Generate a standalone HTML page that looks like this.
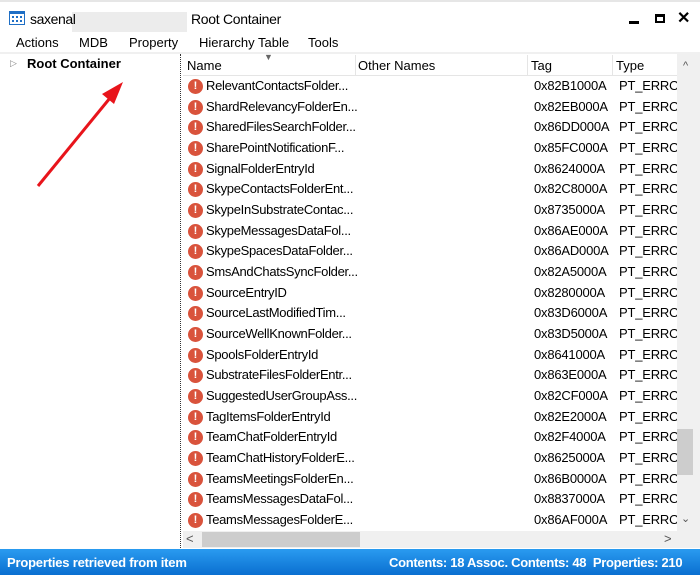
<!DOCTYPE html>
<html><head><style>
*{margin:0;padding:0;box-sizing:border-box}
body{width:700px;height:575px;overflow:hidden;background:#fff;font-family:"Liberation Sans",sans-serif;font-size:13px;color:#000;position:relative}
.a{position:absolute;white-space:nowrap}
#rows{position:absolute;left:183px;top:76px;width:494px;height:455px;overflow:hidden}
.row{position:absolute;left:3px;height:20px;width:490px;letter-spacing:-0.3px}
.ic{position:absolute;left:2px;top:3px;width:15px;height:15px;border-radius:50%;background:#d9533c;color:#fff;font-weight:bold;font-size:11px;text-align:center;line-height:15px;letter-spacing:0}
.nm{position:absolute;left:20px;top:2px}
.tg{position:absolute;left:348px;top:2px;letter-spacing:-0.2px}
.ty{position:absolute;left:433px;top:2px;letter-spacing:-0.2px}
</style></head><body>
<div class="a" style="left:0;top:0;width:700px;height:2px;background:#e6e6e6"></div>
<svg class="a" style="left:9px;top:11px" width="16" height="14"><rect x="0.5" y="0.5" width="15" height="13" fill="#fff" stroke="#1f6fc5"/><rect x="0" y="0" width="16" height="3" fill="#1f6fc5"/><g fill="#1f6fc5"><rect x="3" y="5" width="2" height="2"/><rect x="7" y="5" width="2" height="2"/><rect x="11" y="5" width="2" height="2"/><rect x="3" y="9" width="2" height="2"/><rect x="7" y="9" width="2" height="2"/><rect x="11" y="9" width="2" height="2"/></g></svg>
<div class="a" style="left:72px;top:12px;width:115px;height:20px;background:#ececec"></div>
<div class="a" style="left:30px;top:11px;font-size:14px;letter-spacing:-0.4px">saxenal</div>
<div class="a" style="left:191px;top:11px;font-size:14px;letter-spacing:-0.3px">Root Container</div>
<div class="a" style="left:629px;top:21px;width:10px;height:3px;background:#000"></div>
<div class="a" style="left:655px;top:14px;width:10px;height:9px;border:2px solid #000;border-top-width:3px"></div>
<div class="a" style="left:677px;top:8px;font-size:16px;font-weight:bold">✕</div>
<div class="a" style="left:16px;top:35px">Actions</div>
<div class="a" style="left:79px;top:35px">MDB</div>
<div class="a" style="left:129px;top:35px">Property</div>
<div class="a" style="left:199px;top:35px">Hierarchy Table</div>
<div class="a" style="left:308px;top:35px">Tools</div>
<div class="a" style="left:0;top:52px;width:700px;height:2px;background:#f0f0f0"></div>
<div class="a" style="left:10px;top:58px;font-size:9px;color:#888">▷</div>
<div class="a" style="left:27px;top:56px;font-weight:bold">Root Container</div>
<div class="a" style="left:180px;top:54px;height:494px;border-left:1px dotted #333"></div>
<div class="a" style="left:183px;top:54px;width:495px;height:22px;border-bottom:1px solid #e5e5e5"></div>
<div class="a" style="left:187px;top:58px">Name</div>
<div class="a" style="left:264px;top:52px;font-size:9px;color:#666">▼</div>
<div class="a" style="left:355px;top:55px;height:20px;border-left:1px solid #e5e5e5"></div>
<div class="a" style="left:358px;top:58px">Other Names</div>
<div class="a" style="left:527px;top:55px;height:20px;border-left:1px solid #e5e5e5"></div>
<div class="a" style="left:531px;top:58px">Tag</div>
<div class="a" style="left:612px;top:55px;height:20px;border-left:1px solid #e5e5e5"></div>
<div class="a" style="left:616px;top:58px">Type</div>
<div class="a" style="left:677px;top:54px;width:23px;height:477px;background:#f0f0f0"></div>
<div class="a" style="left:683px;top:60px;font-size:11px;color:#555">^</div>
<div class="a" style="left:677px;top:429px;width:16px;height:46px;background:#cdcdcd"></div>
<div class="a" style="left:681px;top:512px;font-size:11px;color:#555">⌄</div>
<div class="a" style="left:183px;top:531px;width:517px;height:17px;background:#f0f0f0"></div>
<div class="a" style="left:186px;top:531px;font-size:13px;color:#555">&lt;</div>
<div class="a" style="left:202px;top:532px;width:158px;height:15px;background:#cdcdcd"></div>
<div class="a" style="left:664px;top:531px;font-size:13px;color:#555">&gt;</div>
<div id="rows">
<div class="row" style="top:0px"><div class="ic">!</div><div class="nm">RelevantContactsFolder...</div><div class="tg">0x82B1000A</div><div class="ty">PT_ERROR</div></div>
<div class="row" style="top:21px"><div class="ic">!</div><div class="nm">ShardRelevancyFolderEn...</div><div class="tg">0x82EB000A</div><div class="ty">PT_ERROR</div></div>
<div class="row" style="top:41px"><div class="ic">!</div><div class="nm">SharedFilesSearchFolder...</div><div class="tg">0x86DD000A</div><div class="ty">PT_ERROR</div></div>
<div class="row" style="top:62px"><div class="ic">!</div><div class="nm">SharePointNotificationF...</div><div class="tg">0x85FC000A</div><div class="ty">PT_ERROR</div></div>
<div class="row" style="top:83px"><div class="ic">!</div><div class="nm">SignalFolderEntryId</div><div class="tg">0x8624000A</div><div class="ty">PT_ERROR</div></div>
<div class="row" style="top:103px"><div class="ic">!</div><div class="nm">SkypeContactsFolderEnt...</div><div class="tg">0x82C8000A</div><div class="ty">PT_ERROR</div></div>
<div class="row" style="top:124px"><div class="ic">!</div><div class="nm">SkypeInSubstrateContac...</div><div class="tg">0x8735000A</div><div class="ty">PT_ERROR</div></div>
<div class="row" style="top:145px"><div class="ic">!</div><div class="nm">SkypeMessagesDataFol...</div><div class="tg">0x86AE000A</div><div class="ty">PT_ERROR</div></div>
<div class="row" style="top:165px"><div class="ic">!</div><div class="nm">SkypeSpacesDataFolder...</div><div class="tg">0x86AD000A</div><div class="ty">PT_ERROR</div></div>
<div class="row" style="top:186px"><div class="ic">!</div><div class="nm">SmsAndChatsSyncFolder...</div><div class="tg">0x82A5000A</div><div class="ty">PT_ERROR</div></div>
<div class="row" style="top:207px"><div class="ic">!</div><div class="nm">SourceEntryID</div><div class="tg">0x8280000A</div><div class="ty">PT_ERROR</div></div>
<div class="row" style="top:227px"><div class="ic">!</div><div class="nm">SourceLastModifiedTim...</div><div class="tg">0x83D6000A</div><div class="ty">PT_ERROR</div></div>
<div class="row" style="top:248px"><div class="ic">!</div><div class="nm">SourceWellKnownFolder...</div><div class="tg">0x83D5000A</div><div class="ty">PT_ERROR</div></div>
<div class="row" style="top:269px"><div class="ic">!</div><div class="nm">SpoolsFolderEntryId</div><div class="tg">0x8641000A</div><div class="ty">PT_ERROR</div></div>
<div class="row" style="top:289px"><div class="ic">!</div><div class="nm">SubstrateFilesFolderEntr...</div><div class="tg">0x863E000A</div><div class="ty">PT_ERROR</div></div>
<div class="row" style="top:310px"><div class="ic">!</div><div class="nm">SuggestedUserGroupAss...</div><div class="tg">0x82CF000A</div><div class="ty">PT_ERROR</div></div>
<div class="row" style="top:331px"><div class="ic">!</div><div class="nm">TagItemsFolderEntryId</div><div class="tg">0x82E2000A</div><div class="ty">PT_ERROR</div></div>
<div class="row" style="top:351px"><div class="ic">!</div><div class="nm">TeamChatFolderEntryId</div><div class="tg">0x82F4000A</div><div class="ty">PT_ERROR</div></div>
<div class="row" style="top:372px"><div class="ic">!</div><div class="nm">TeamChatHistoryFolderE...</div><div class="tg">0x8625000A</div><div class="ty">PT_ERROR</div></div>
<div class="row" style="top:393px"><div class="ic">!</div><div class="nm">TeamsMeetingsFolderEn...</div><div class="tg">0x86B0000A</div><div class="ty">PT_ERROR</div></div>
<div class="row" style="top:413px"><div class="ic">!</div><div class="nm">TeamsMessagesDataFol...</div><div class="tg">0x8837000A</div><div class="ty">PT_ERROR</div></div>
<div class="row" style="top:434px"><div class="ic">!</div><div class="nm">TeamsMessagesFolderE...</div><div class="tg">0x86AF000A</div><div class="ty">PT_ERROR</div></div>
</div>
<svg class="a" style="left:0;top:0" width="200" height="200"><line x1="38" y1="186" x2="110" y2="98" stroke="#e8141b" stroke-width="3"/><polygon points="123,82 102,94 114,104" fill="#e8141b"/></svg>
<div class="a" style="left:0;top:549px;width:700px;height:26px;background:linear-gradient(#2a9bf0,#0a6fd0)"></div>
<div class="a" style="left:7px;top:555px;color:#fff;font-weight:bold;letter-spacing:-0.2px">Properties retrieved from item</div>
<div class="a" style="left:389px;top:555px;color:#fff;font-weight:bold;letter-spacing:-0.3px">Contents: 18 Assoc. Contents: 48&nbsp; Properties: 210</div>
</body></html>
